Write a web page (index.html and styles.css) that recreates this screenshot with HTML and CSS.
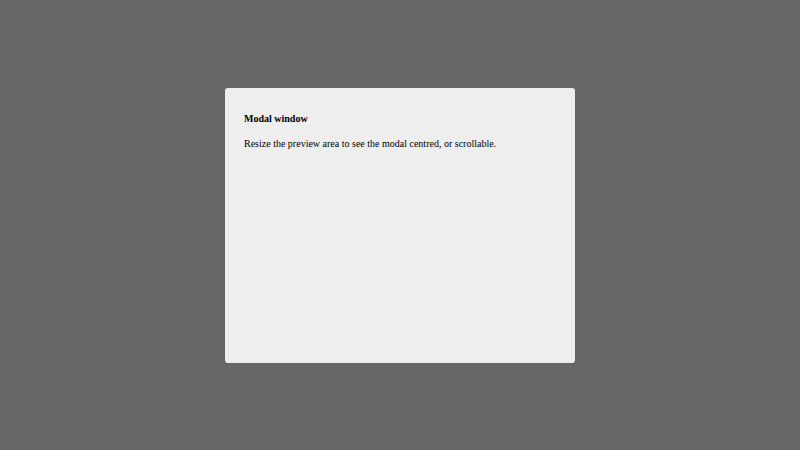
FILE: index.html
```html
<!DOCTYPE html>
<html>
<head>
<meta charset="utf-8">
<link rel="stylesheet" href="styles.css">
</head>
<body>
<div class="overlay">
  <div class="modal">
    <h1 class="title">Modal window</h1>
    <p class="text">Resize the preview area to see the modal centred, or scrollable.</p>
  </div>
</div>
</body>
</html>
```
FILE: styles.css
```css
html, body {
  margin: 0;
  height: 100%;
}
body {
  background: #666666;
  font-family: "Liberation Serif", "Times New Roman", serif;
  font-size: 10px;
  line-height: 12px;
  color: #000;
}
.overlay {
  height: 100%;
  display: flex;
  align-items: center;
  justify-content: center;
}
.modal {
  box-sizing: border-box;
  width: 350px;
  height: 275px;
  background: #eeeeee;
  border-radius: 3px;
  padding: 25px 19px;
}
.title {
  font-size: 10px;
  font-weight: bold;
  margin: 0 0 13px;
}
.text {
  margin: 0;
}
```
